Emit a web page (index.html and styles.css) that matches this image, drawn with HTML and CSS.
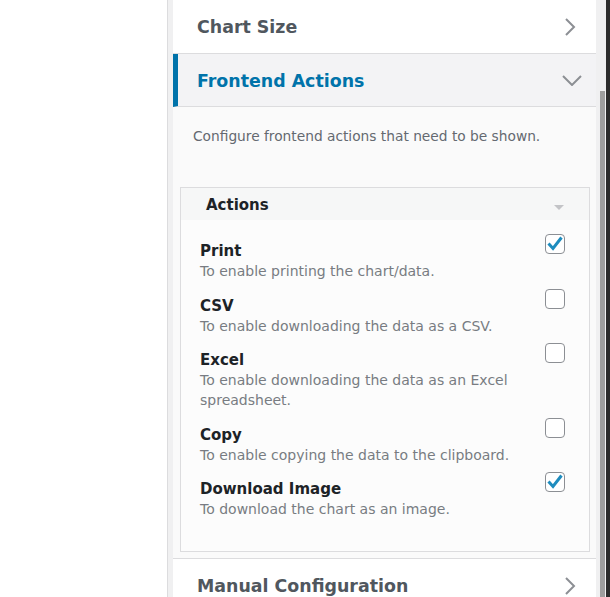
FILE: index.html
```html
<!DOCTYPE html>
<html>
<head>
<meta charset="utf-8">
<link rel="stylesheet" href="styles.css">
</head>
<body>
<div class="page">
  <div class="blank"></div>
  <div class="sidebar">
    <div class="panel">
      <div class="section closed">
        <span class="section-title">Chart Size</span>
        <svg class="chev-right" width="12" height="18" viewBox="0 0 12 18"><path d="M2 1 L10 9 L2 17" fill="none" stroke="#8c8f94" stroke-width="2"/></svg>
      </div>
      <div class="section open">
        <span class="section-title">Frontend Actions</span>
        <svg class="chev-down" width="20" height="11" viewBox="0 0 20 11"><path d="M1 1 L10 10 L19 1" fill="none" stroke="#8c8f94" stroke-width="2"/></svg>
      </div>
      <div class="section-body">
        <p class="intro">Configure frontend actions that need to be shown.</p>
        <div class="box">
          <div class="box-head">
            <span class="box-title">Actions</span>
            <span class="tri"></span>
          </div>
          <div class="box-body">
            <div class="item">
              <div class="item-text">
                <div class="item-title">Print</div>
                <div class="item-desc">To enable printing the chart/data.</div>
              </div>
              <span class="cb"><svg width="18" height="18" viewBox="0 0 18 18"><path d="M2.5 8.5 L7 13.5 L15.5 2.5" fill="none" stroke="#1e8cbe" stroke-width="3"/></svg></span>
            </div>
            <div class="item">
              <div class="item-text">
                <div class="item-title">CSV</div>
                <div class="item-desc">To enable downloading the data as a CSV.</div>
              </div>
              <span class="cb"></span>
            </div>
            <div class="item">
              <div class="item-text">
                <div class="item-title">Excel</div>
                <div class="item-desc">To enable downloading the data as an Excel spreadsheet.</div>
              </div>
              <span class="cb"></span>
            </div>
            <div class="item">
              <div class="item-text">
                <div class="item-title">Copy</div>
                <div class="item-desc">To enable copying the data to the clipboard.</div>
              </div>
              <span class="cb"></span>
            </div>
            <div class="item">
              <div class="item-text">
                <div class="item-title">Download Image</div>
                <div class="item-desc">To download the chart as an image.</div>
              </div>
              <span class="cb"><svg width="18" height="18" viewBox="0 0 18 18"><path d="M2.5 8.5 L7 13.5 L15.5 2.5" fill="none" stroke="#1e8cbe" stroke-width="3"/></svg></span>
            </div>
          </div>
        </div>
      </div>
      <div class="section closed last">
        <span class="section-title">Manual Configuration</span>
        <svg class="chev-right" width="12" height="18" viewBox="0 0 12 18"><path d="M2 1 L10 9 L2 17" fill="none" stroke="#8c8f94" stroke-width="2"/></svg>
      </div>
    </div>
    <div class="scroll">
      <div class="thumb"></div>
    </div>
  </div>
  <div class="edge"></div>
</div>
</body>
</html>
```

FILE: styles.css
```css
* { box-sizing: border-box; }
html, body { margin: 0; padding: 0; background: #fff; }
body { font-family: "DejaVu Sans", Verdana, sans-serif; }
.page { display: flex; width: 610px; height: 597px; overflow: hidden; }
.blank { width: 167px; flex: none; background: #fff; }
.sidebar { width: 439px; flex: none; display: flex; background: #f0f0f1; border-left: 1px solid #dcdcde; padding-left: 5px; }
.panel { width: 423px; flex: none; display: flex; flex-direction: column; }
.panel > * { flex: none; }
.scroll { width: 10px; flex: none; padding-left: 4px; padding-top: 91px; }
.thumb { width: 5px; height: 100%; background: #9e9e9e; }
.edge { flex: 1; background: #2c2c2c; }

.section { display: flex; align-items: center; justify-content: space-between; }
.section-title { font-size: 17.4px; font-weight: bold; }
.closed { background: #fff; height: 54px; padding: 0 20px 0 24px; border-bottom: 1px solid #dcdcde; color: #50575e; }
.closed.last { border-bottom: 0; border-top: 1px solid #dcdcde; height: 54px; align-items: flex-start; padding-top: 17px; }
.closed.last .chev-right { margin-top: 1px; }
.open { background: #f3f3f5; height: 53px; border-left: 5px solid #0073aa; border-bottom: 1px solid #dcdcde; padding: 2px 14px 0 19px; color: #0073aa; }
.chev-down { margin-top: -2px; }

.section-body { background: #fafafa; padding: 19px 6px 6px 7px; }
.intro { margin: 0 0 41px 13px; font-size: 13.75px; line-height: 20px; color: #646970; }

.box { border: 1px solid #dcdcde; background: #fcfcfc; }
.box-head { height: 32px; background: #f6f7f7; display: flex; align-items: center; justify-content: space-between; padding: 1px 25px 0; }
.box-title { font-size: 15px; font-weight: bold; color: #1d2327; }
.tri { width: 0; height: 0; border-left: 5px solid transparent; border-right: 5px solid transparent; border-top: 5px solid #c3c4c7; margin-top: 5px; }

.box-body { padding: 14px 24px 32px 19px; display: flex; flex-direction: column; gap: 7.5px; }
.item { display: flex; justify-content: space-between; align-items: flex-start; }
.item-text { padding-top: 7px; width: 320px; }
.item-title { font-size: 15px; font-weight: bold; line-height: 20px; color: #1d2327; }
.item-desc { font-size: 14px; line-height: 20px; color: #787c82; }
.cb { width: 20px; height: 20px; flex: none; border: 1px solid #8c8f94; border-radius: 4px; background: #fff; display: flex; align-items: center; justify-content: center; }
.cb svg { display: block; }
```
